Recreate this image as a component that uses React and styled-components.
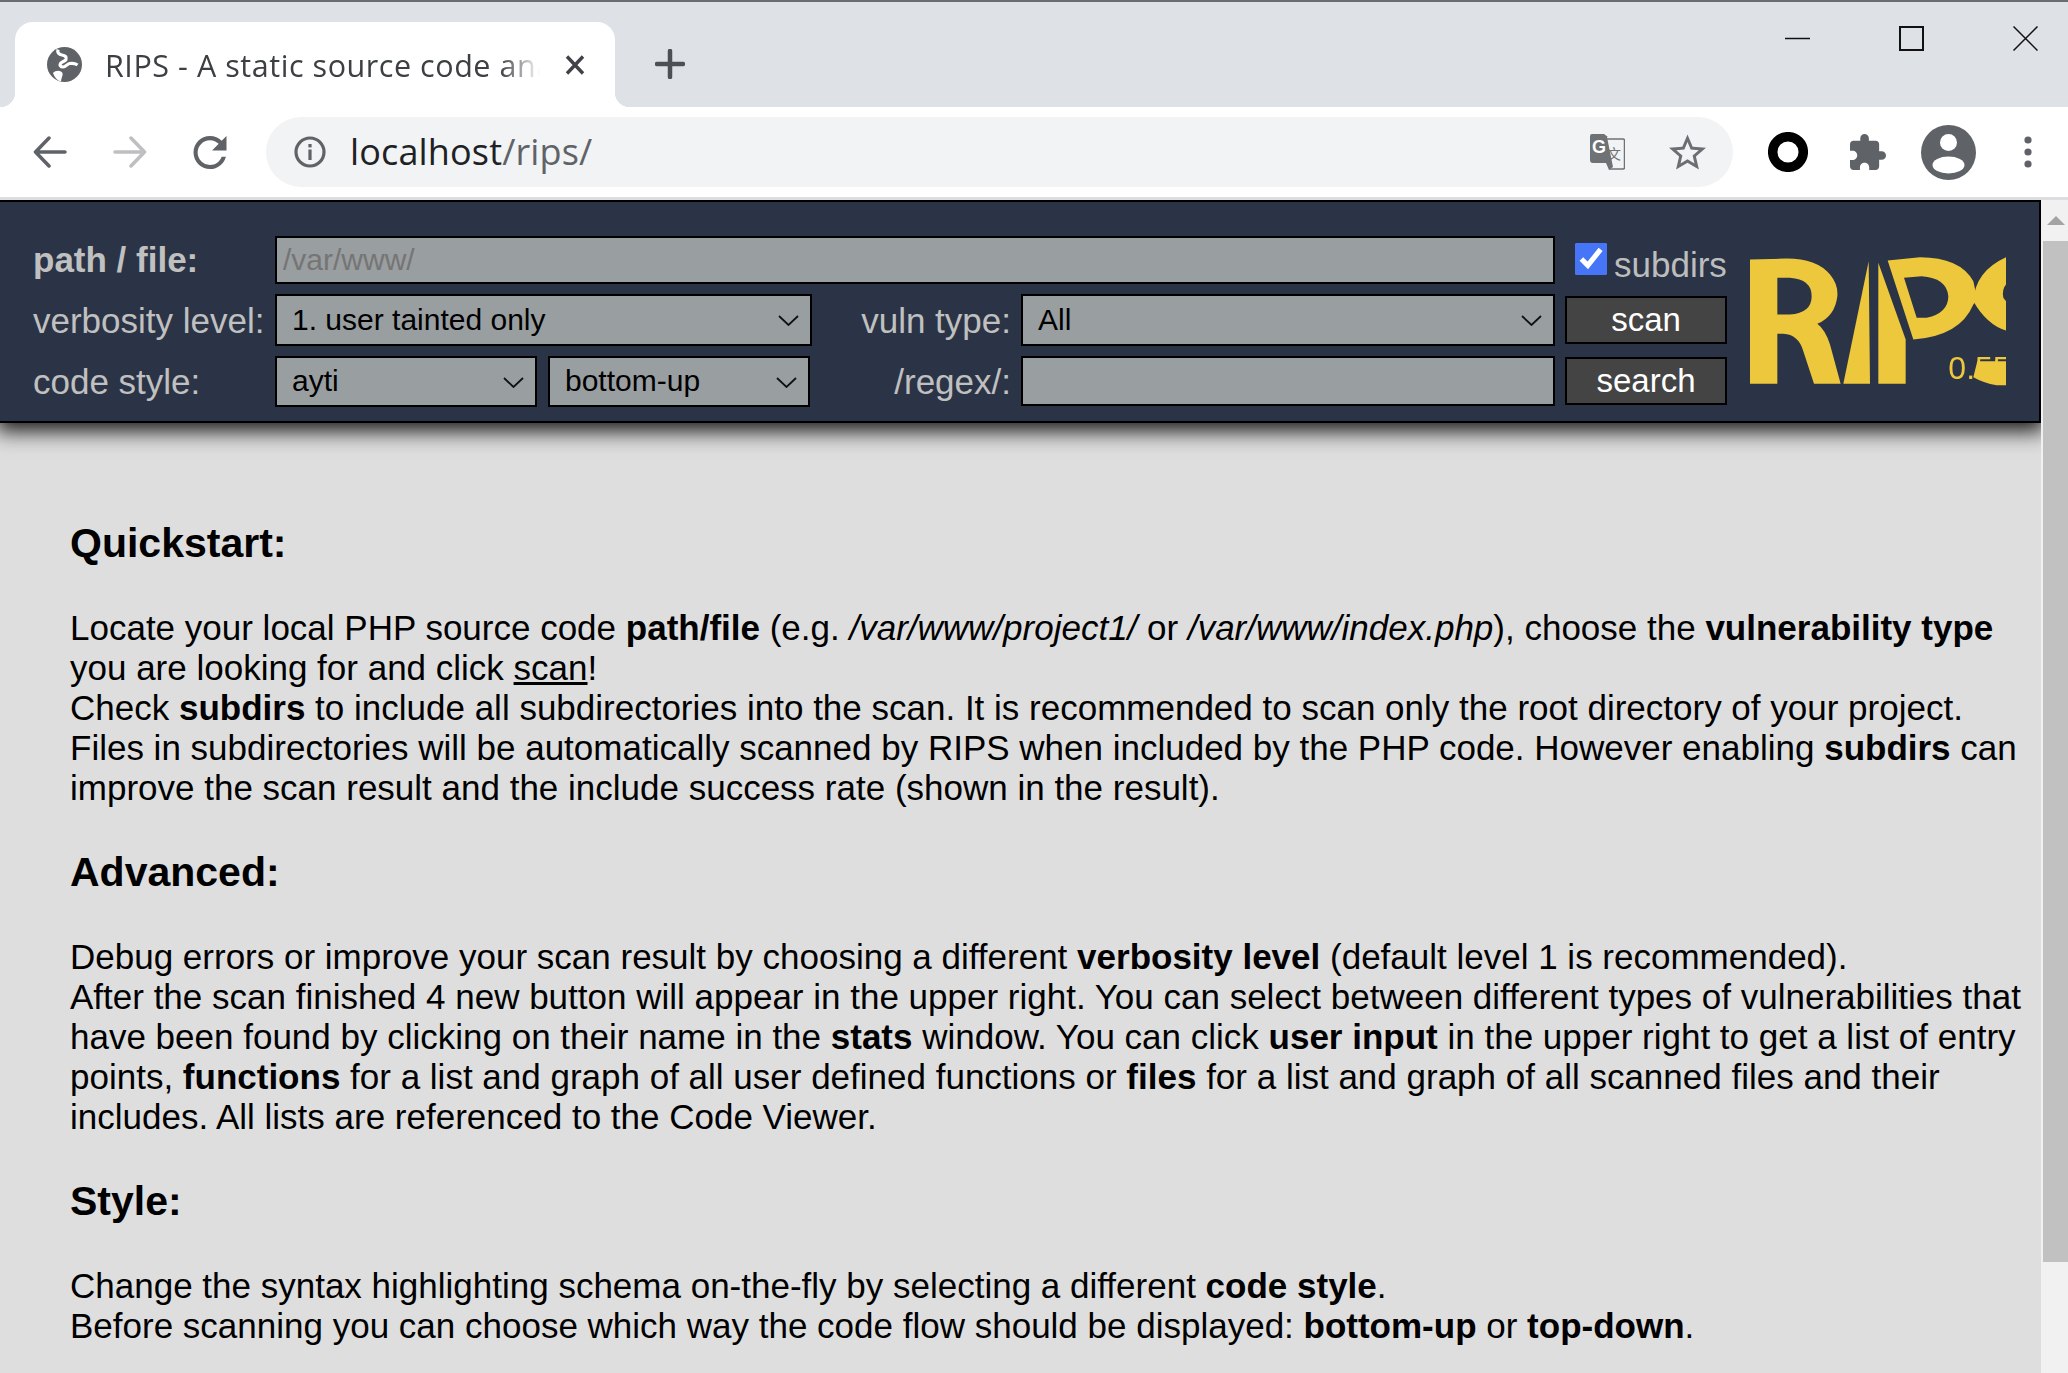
import React from "react";
import styled, { createGlobalStyle } from "styled-components";

const Global = createGlobalStyle`
  html, body { margin: 0; padding: 0; background: #dedede; overflow: hidden; }
  * { box-sizing: border-box; }
`;

const Page = styled.div`
  width: 2068px;
  height: 1373px;
  overflow: hidden;
  display: flex;
  flex-direction: column;
  font-family: "Liberation Sans", Arial, sans-serif;
`;

const TabStrip = styled.div`
  height: 107px;
  flex: none;
  background: #dee1e6;
  border-top: 2px solid #6a6d72;
  padding: 20px 30px 0 15px;
  display: flex;
  align-items: flex-start;
`;

const Tab = styled.div`
  position: relative;
  width: 600px;
  height: 85px;
  background: #fff;
  border-radius: 18px 18px 0 0;
  display: flex;
  align-items: center;
  padding: 0 30px 0 32px;

  &::before, &::after {
    content: "";
    position: absolute;
    bottom: 0;
    width: 15px;
    height: 15px;
  }
  &::before { left: -15px; background: radial-gradient(circle at 0 0, transparent 15px, #fff 15.5px); }
  &::after { right: -15px; background: radial-gradient(circle at 100% 0, transparent 15px, #fff 15.5px); }
`;

const TabTitle = styled.span`
  width: 440px;
  margin: 0 21px 0 23px;
  white-space: nowrap;
  overflow: hidden;
  font-family: "Open Sans", sans-serif;
  font-size: 30.5px;
  letter-spacing: 0.55px;
  color: #3c4043;
  -webkit-mask-image: linear-gradient(to right, #000 395px, transparent 435px);
  mask-image: linear-gradient(to right, #000 395px, transparent 435px);
`;

const NewTab = styled.svg`
  width: 30px;
  height: 30px;
  margin: 27px 0 0 40px;
  flex: none;
`;

const WindowControls = styled.div`
  margin-left: auto;
  margin-top: 4px;
  display: flex;
  gap: 89px;
`;

const WinIcon = styled.svg`
  width: 25px;
  height: 25px;
  display: block;
`;

const Toolbar = styled.div`
  height: 90px;
  flex: none;
  background: #fff;
  display: flex;
  align-items: center;
  padding-left: 10px;
`;

const Slot = styled.div`
  width: 80px;
  height: 60px;
  flex: none;
  display: flex;
  align-items: center;
  justify-content: center;
`;

const Omnibox = styled.div`
  width: 1467px;
  height: 70px;
  margin: 0 15px 0 16px;
  flex: none;
  background: #f1f3f4;
  border-radius: 35px;
  display: flex;
  align-items: center;
  padding: 0 27px 0 28px;
`;

const Url = styled.span`
  margin-left: 24px;
  font-family: "Open Sans", sans-serif;
  font-size: 36px;
  letter-spacing: 0.15px;
  line-height: 1;
  padding-bottom: 1px;
  color: #5f6368;
  flex: 1;
  b { font-weight: 400; color: #202124; }
`;

const Translate = styled.svg`
  width: 35px;
  height: 36px;
  margin-right: 44px;
  flex: none;
`;

const Separator = styled.div`
  height: 3px;
  flex: none;
  background: #dcdee2;
`;

const Viewport = styled.div`
  flex: 1;
  min-height: 0;
  display: flex;
`;

const Main = styled.main`
  flex: 1;
  min-width: 0;
  background: #dedede;
  overflow: hidden;
`;

const Scrollbar = styled.div`
  width: 27px;
  flex: none;
  background: #f1f1f1;
  display: flex;
  flex-direction: column;
  align-items: flex-end;
  position: relative;
`;

const ScrollUp = styled.div`
  height: 41px;
  width: 25px;
  flex: none;
  display: flex;
  justify-content: center;
  padding-top: 16px;

  &::before {
    content: "";
    width: 0;
    height: 0;
    border-left: 9px solid transparent;
    border-right: 9px solid transparent;
    border-bottom: 9px solid #a3a3a3;
  }
`;

const ScrollThumb = styled.div`
  width: 25px;
  height: 1021px;
  flex: none;
  background: #c1c1c1;
`;

const Header = styled.header`
  position: relative;
  height: 223px;
  background: #2b3446;
  border: 2px solid #000;
  border-left: 0;
  padding: 34px 0 0 33px;
  box-shadow: 0 4px 20px 4px rgba(0, 0, 0, 0.9);
  display: grid;
  grid-template-columns: 232px 537px 189px 534px 162px 269px;
  grid-template-rows: 48px 52px 50px;
  column-gap: 10px;
  row-gap: 10px;
`;

const Label = styled.label`
  font-size: 35px;
  line-height: 1;
  color: #c0c0c0;
  align-self: center;
  white-space: nowrap;
  font-weight: ${(p) => (p.$bold ? 700 : 400)};
  text-align: ${(p) => (p.$right ? "right" : "left")};
  padding-bottom: ${(p) => (p.$bold ? "2px" : "0")};
`;

const PathField = styled.input`
  grid-column: span 3;
  height: 48px;
  border: 2px solid #000;
  background: #999ea0;
  padding: 0 6px;
  font: 30px "Liberation Sans", Arial, sans-serif;
  color: #000;
  outline: none;
  border-radius: 0;
  &::placeholder { color: #757575; opacity: 1; }
`;

const RegexField = styled(PathField)`
  grid-column: auto;
  height: 50px;
`;

const CheckCell = styled.div`
  display: flex;
  align-items: center;
  padding-left: 10px;
  gap: 7px;
`;

const Check = styled.input`
  width: 32px;
  height: 32px;
  margin: 0 0 2px;
  accent-color: #4676f7;
  flex: none;
`;

const CheckLabel = styled.span`
  font-size: 35px;
  color: #bdbdbd;
  line-height: 1;
  padding-top: 8px;
`;

const SelectBox = styled.div`
  position: relative;
  width: ${(p) => p.$width || "100%"};
  height: ${(p) => p.$height || "52px"};
`;

const Select = styled.select`
  appearance: none;
  width: 100%;
  height: 100%;
  border: 2px solid #000;
  border-radius: 0;
  background: #999ea0;
  padding: 0 40px 2px 15px;
  font: 30px "Liberation Sans", Arial, sans-serif;
  color: #000;
  outline: none;
`;

const Chevron = styled.svg`
  position: absolute;
  right: 13px;
  top: 50%;
  margin-top: -5px;
  width: 21px;
  height: 11px;
  pointer-events: none;
`;

const Pair = styled.div`
  display: flex;
  gap: 11px;
`;

const Action = styled.button`
  height: 48px;
  margin-top: ${(p) => p.$top || "2px"};
  border: 2px solid #000;
  background: #444;
  color: #fff;
  font: 33px "Liberation Sans", Arial, sans-serif;
  padding: 0;
`;

const Logo = styled.svg`
  grid-column: 6;
  grid-row: 1 / span 3;
  width: 256px;
  height: 129px;
  margin: 21px 0 0 13px;
  filter: blur(0.4px);
`;

const Content = styled.div`
  padding: 56px 15px 0 70px;
  color: #000;
`;

const Title = styled.h2`
  margin: 41px 0 42px;
  font-size: 41px;
  line-height: 46px;
  font-weight: 700;
`;

const Text = styled.p`
  margin: 0;
  font-size: 35px;
  line-height: 40px;
  a { color: inherit; text-decoration: underline; }
`;

const Select2 = ({ children, width, height }) => (
  <SelectBox $width={width} $height={height}>
    <Select defaultValue={children}>
      <option>{children}</option>
    </Select>
    <Chevron viewBox="0 0 21 11" fill="none" stroke="#111" strokeWidth="1.8">
      <path d="M1 1l9.5 9L20 1" />
    </Chevron>
  </SelectBox>
);

const Globe = () => (
  <svg width="35" height="35" viewBox="0 0 35 35" style={{ flex: "none" }}>
    <circle cx="17.5" cy="17.5" r="17.5" fill="#5f6368" />
    <path d="M11 2.5c-1 3 1 5 4 5.5 3 .5 5 2 4 4.500-1 2-4 2-5.500 4-1 1.500 0 3.500 2.500 3.500 3 0 4-3 6.500-3.500 3-.5 6 0 8 1.500" fill="none" stroke="#fff" strokeWidth="3.200" />
    <path d="M6 26c2-2 5-3 8-1.500 2 1 2 3 1 5.500-.5 1.500-1 3-1 4.500-4-1-6.500-4-8-8.500z" fill="#fff" />
  </svg>
);

export default function App() {
  return (
    <Page>
      <Global />
      <TabStrip>
        <Tab>
          <Globe />
          <TabTitle>RIPS - A static source code analyser</TabTitle>
          <svg width="20" height="20" viewBox="0 0 20 20" fill="none" stroke="#3f4246" strokeWidth="3.400" style={{ flex: "none" }}>
            <path d="M2 1.500l16 17M18 1.500l-16 17" />
          </svg>
        </Tab>
        <NewTab viewBox="0 0 30 30" fill="none" stroke="#4c4f53" strokeWidth="4.500" strokeLinecap="round">
          <path d="M15 2v26M2 15h26" />
        </NewTab>
        <WindowControls>
          <WinIcon viewBox="0 0 25 25" fill="none" stroke="#111" strokeWidth="1.500">
            <path d="M0 12.500h25" />
          </WinIcon>
          <WinIcon viewBox="0 0 25 25" fill="none" stroke="#111" strokeWidth="2">
            <rect x="1" y="1" width="23" height="23" />
          </WinIcon>
          <WinIcon viewBox="0 0 25 25" fill="none" stroke="#111" strokeWidth="1.500">
            <path d="M0.500 0.500l24 24M24.500 0.500l-24 24" />
          </WinIcon>
        </WindowControls>
      </TabStrip>
      <Toolbar>
        <Slot>
          <svg width="34" height="32" viewBox="0 0 34 32" fill="none" stroke="#5f6368" strokeWidth="3.500" strokeLinecap="round" strokeLinejoin="round">
            <path d="M32 16H3M16 2L2.500 16 16 30" />
          </svg>
        </Slot>
        <Slot>
          <svg width="34" height="32" viewBox="0 0 34 32" fill="none" stroke="#bdbfc1" strokeWidth="3.500" strokeLinecap="round" strokeLinejoin="round">
            <path d="M2 16h29M18 2l13.500 14L18 30" />
          </svg>
        </Slot>
        <Slot>
          <svg width="34" height="33" viewBox="4 4 16 16" fill="#5f6368">
            <path d="M17.650 6.350C16.200 4.900 14.210 4 12 4c-4.420 0-7.990 3.580-7.990 8s3.570 8 7.990 8c3.730 0 6.840-2.550 7.730-6h-2.080c-.82 2.330-3.040 4-5.650 4-3.310 0-6-2.690-6-6s2.690-6 6-6c1.660 0 3.140.69 4.220 1.780L13 11h7V4l-2.350 2.350z" />
          </svg>
        </Slot>
        <Omnibox>
          <svg width="32" height="32" viewBox="0 0 32 32" style={{ flex: "none" }}>
            <circle cx="16" cy="16" r="14" fill="none" stroke="#5f6368" strokeWidth="3.200" />
            <rect x="14.400" y="8" width="3.200" height="3.400" fill="#5f6368" />
            <rect x="14.400" y="13.500" width="3.200" height="10.500" fill="#5f6368" />
          </svg>
          <Url><b>localhost</b>/rips/</Url>
          <Translate viewBox="0 0 35 36">
            <path d="M2 0h12l4 3h-1l6 30-4 3-3-7H3a3 3 0 0 1-3-3V2a2 2 0 0 1 2-2z" fill="#6f7275" />
            <path d="M17 5h16a1.500 1.500 0 0 1 1.500 1.500v27a1.500 1.500 0 0 1-1.500 1.500H19" fill="none" stroke="#6f7275" strokeWidth="1.500" />
            <text x="2" y="19" fontSize="18" fontWeight="700" fill="#fff" fontFamily="Liberation Sans">G</text>
            <text x="17" y="25" fontSize="14" fill="#6f7275" fontFamily="Noto Sans CJK SC">文</text>
          </Translate>
          <svg width="37" height="36" viewBox="2 2 20 19" fill="#6b6e72" style={{ flex: "none" }}>
            <path d="M22 9.240l-7.190-.62L12 2 9.190 8.630 2 9.240l5.460 4.730L5.820 21 12 17.270 18.180 21l-1.630-7.030L22 9.240zM12 15.400l-3.760 2.270 1-4.280-3.320-2.880 4.380-.38L12 6.100l1.710 4.040 4.380.38-3.320 2.880 1 4.280L12 15.400z" />
          </svg>
        </Omnibox>
        <Slot>
          <svg width="40" height="40" viewBox="0 0 40 40">
            <circle cx="20" cy="20" r="15.300" fill="none" stroke="#000" strokeWidth="9.500" />
          </svg>
        </Slot>
        <Slot>
          <svg width="36" height="36" viewBox="2 1 21 21" fill="#5f6368">
            <path d="M20.500 11H19V7c0-1.100-.9-2-2-2h-4V3.500C13 2.120 11.880 1 10.500 1S8 2.120 8 3.500V5H4c-1.100 0-1.990.9-1.990 2v3.800H3.500c1.490 0 2.700 1.210 2.700 2.700s-1.210 2.700-2.700 2.700H2V20c0 1.100.9 2 2 2h3.800v-1.500c0-1.490 1.210-2.700 2.700-2.700 1.490 0 2.700 1.210 2.700 2.700V22H17c1.100 0 2-.9 2-2v-4h1.500c1.380 0 2.500-1.120 2.500-2.500S21.880 11 20.500 11z" />
          </svg>
        </Slot>
        <Slot>
          <svg width="55" height="55" viewBox="0 0 55 55">
            <circle cx="27.500" cy="27.500" r="27.500" fill="#5f6368" />
            <circle cx="27.500" cy="17.500" r="8.500" fill="#fff" />
            <ellipse cx="27.500" cy="40" rx="16" ry="8.500" fill="#fff" />
          </svg>
        </Slot>
        <Slot>
          <svg width="8" height="32" viewBox="0 0 8 32" fill="#5f6368">
            <circle cx="4" cy="4" r="3.600" />
            <circle cx="4" cy="16" r="3.600" />
            <circle cx="4" cy="28" r="3.600" />
          </svg>
        </Slot>
      </Toolbar>
      <Separator />
      <Viewport>
        <Main>
          <Header>
            <Label $bold>path / file:</Label>
            <PathField placeholder="/var/www/" />
            <CheckCell>
              <Check type="checkbox" defaultChecked />
              <CheckLabel>subdirs</CheckLabel>
            </CheckCell>
            <Logo viewBox="30 38 768 386">
              <g fill="#edc83c">
                <path fillRule="evenodd" d="M30 45L140 42Q230 42 270 90Q295 120 292 155Q285 215 232 238Q255 255 270 300L302 418H222L190 320Q175 270 130 268H112V418H30ZM112 100V210H150Q215 205 215 155Q215 105 150 100Z" />
                <path d="M386 50L390 418H310Z" />
                <path d="M415 55L497 285V418H415Z" />
                <path fillRule="evenodd" d="M443 48L540 38Q660 38 700 110L712 165L700 180Q660 275 520 285ZM492 100L530 220H560Q625 205 625 155Q620 100 545 95Z" />
                <path d="M700 170Q705 80 798 38V120Q785 135 790 160L798 170V258Q740 240 700 170Z" />
                <text x="625" y="402" fontSize="96" fontFamily="Liberation Sans">0.55</text>
                <path d="M700 398L712 350H798V422H770Q730 415 700 398Z" />
              </g>
            </Logo>
            <Label>verbosity level:</Label>
            <Select2>1. user tainted only</Select2>
            <Label $right>vuln type:</Label>
            <Select2>All</Select2>
            <Action>scan</Action>
            <Label>code style:</Label>
            <Pair>
              <Select2 width="262px" height="51px">ayti</Select2>
              <Select2 width="262px" height="51px">bottom-up</Select2>
            </Pair>
            <Label $right>/regex/:</Label>
            <RegexField />
            <Action $top="1px">search</Action>
          </Header>
          <Content>
            <Title>Quickstart:</Title>
            <Text>
              Locate your local PHP source code <b>path/file</b> (e.g. <i>/var/www/project1/</i> or <i>/var/www/index.php</i>), choose the <b>vulnerability type</b> you are looking for and click <a>scan</a>!<br />
              Check <b>subdirs</b> to include all subdirectories into the scan. It is recommended to scan only the root directory of your project. Files in subdirectories will be automatically scanned by RIPS when included by the PHP code. However enabling <b>subdirs</b> can improve the scan result and the include success rate (shown in the result).
            </Text>
            <Title>Advanced:</Title>
            <Text>
              Debug errors or improve your scan result by choosing a different <b>verbosity level</b> (default level 1 is recommended).<br />
              After the scan finished 4 new button will appear in the upper right. You can select between different types of vulnerabilities that have been found by clicking on their name in the <b>stats</b> window. You can click <b>user input</b> in the upper right to get a list of entry points, <b>functions</b> for a list and graph of all user defined functions or <b>files</b> for a list and graph of all scanned files and their includes. All lists are referenced to the Code Viewer.
            </Text>
            <Title>Style:</Title>
            <Text>
              Change the syntax highlighting schema on-the-fly by selecting a different <b>code style</b>.<br />
              Before scanning you can choose which way the code flow should be displayed: <b>bottom-up</b> or <b>top-down</b>.
            </Text>
          </Content>
        </Main>
        <Scrollbar>
          <ScrollUp />
          <ScrollThumb />
        </Scrollbar>
      </Viewport>
    </Page>
  );
}
